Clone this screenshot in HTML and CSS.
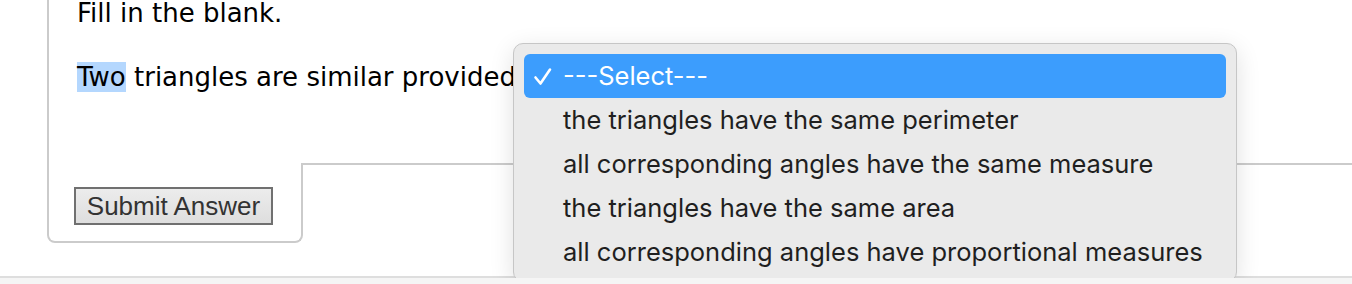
FILE: index.html
```html
<!DOCTYPE html>
<html>
<head>
	<title>Question</title>
	<link rel="stylesheet" href="styles.css">
</head>
<body>

<div class="page">

	<div class="card">
		<div class="question">
			<p class="prompt">Fill in the blank.</p>
			<p class="stem"><span class="mark">Two</span> triangles are similar provided</p>
		</div>
		<div class="foot">
			<div class="actions">
				<button class="submit">Submit Answer</button>
			</div>
			<div class="rest"></div>
		</div>
	</div>

	<div class="popup">
		<div class="opt opt-on">
			<svg class="check" width="20" height="20" viewBox="0 0 20 20"><path d="M2.5 10.5 L7.5 16.5 L17 2.5" fill="none" stroke="#fff" stroke-width="2.6" stroke-linecap="round" stroke-linejoin="round"/></svg>
			---Select---
		</div>
		<div class="opt">the triangles have the same perimeter</div>
		<div class="opt">all corresponding angles have the same measure</div>
		<div class="opt">the triangles have the same area</div>
		<div class="opt">all corresponding angles have proportional measures</div>
	</div>

</div>

</body>
</html>
```

FILE: styles.css
```css
*{
	margin: 0;
	padding: 0;
	box-sizing: border-box;
}

body{
	background: #f5f5f5;
	overflow: hidden;
}

.page{
	position: relative;
	display: flow-root;
	background: #fff;
	height: 278px;
	padding-bottom: 34px;
	border-bottom: 2px solid #dedede;
}

.card{
	margin-left: 47px;
}

.question{
	border-left: 2px solid #cbcbcb;
	padding: 0 0 66px 28px;
	font-family: "DejaVu Sans", Verdana, sans-serif;
	font-size: 26px;
	line-height: 40px;
	color: #000;
}

.prompt{
	margin-top: -2px;
	line-height: 30px;
}

.stem{
	margin-top: 29px;
}

.mark{
	background: #b4d7fe;
}

.foot{
	display: flex;
}

.actions{
	width: 256px;
	height: 80px;
	border: 2px solid #cbcbcb;
	border-top: none;
	border-radius: 0 0 8px 8px;
	padding: 24px 0 0 25px;
}

.rest{
	flex: 1;
	border-top: 2px solid #cbcbcb;
}

.submit{
	width: 199px;
	height: 38px;
	border: 2px solid #707070;
	background: linear-gradient(#ececec, #dedede);
	font-family: "Liberation Sans", Arial, sans-serif;
	font-size: 26px;
	color: #333;
	line-height: 32px;
}

.popup{
	position: absolute;
	left: 513px;
	top: 43px;
	width: 724px;
	height: 239px;
	padding: 10px;
	background: #eaeaea;
	border: 1px solid #c6c6c6;
	border-radius: 10px;
	box-shadow: 0 6px 24px rgba(0,0,0,.12);
	font-family: Inter, "Noto Sans", sans-serif;
	font-size: 25.5px;
	color: #1f1f1f;
}

.opt{
	height: 44px;
	line-height: 44px;
	padding-left: 39px;
	border-radius: 6px;
	white-space: nowrap;
}

.opt-on{
	position: relative;
	background: #3c9dfd;
	color: #fff;
}

.check{
	position: absolute;
	left: 9px;
	top: 13px;
}
```
